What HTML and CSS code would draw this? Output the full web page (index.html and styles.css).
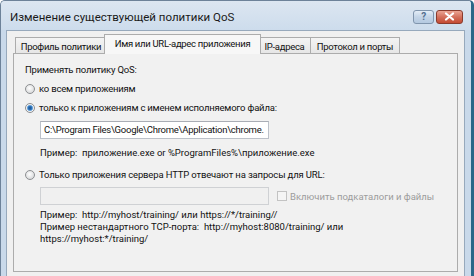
FILE: index.html
```html
<!DOCTYPE html>
<html lang="ru">
<head>
  <meta charset="UTF-8">
  <title>Изменение существующей политики QoS</title>
  <link rel="stylesheet" href="styles.css">
</head>
<body>
  <div class="window">
    <div class="titlebar">
      <span class="title">Изменение существующей политики QoS</span>
      <div class="caption-buttons">
        <span class="cap-btn help">?</span>
        <span class="cap-btn close">
          <svg width="11" height="9" viewBox="0 0 11 9"><path d="M2 1.5 L9 7.5 M9 1.5 L2 7.5" stroke="#fff" stroke-width="2.2" stroke-linecap="round"/></svg>
        </span>
      </div>
    </div>
    <div class="client">
      <div class="tabs">
        <div class="tab tab-profile">Профиль политики</div>
        <div class="tab tab-app active">Имя или URL-адрес приложения</div>
        <div class="tab tab-ip">IP-адреса</div>
        <div class="tab tab-proto">Протокол и порты</div>
      </div>
      <div class="panel">
        <div class="row">Применять политику QoS:</div>
        <div class="row option"><span class="radio"></span>ко всем приложениям</div>
        <div class="row option"><span class="radio checked"></span>только к приложениям с именем исполняемого файла:</div>
        <div class="indent">
          <div class="textbox">C:\Program Files\Google\Chrome\Application\chrome.</div>
          <div class="hint">Пример:&nbsp; приложение.exe or %ProgramFiles%\приложение.exe</div>
        </div>
        <div class="row option http"><span class="radio"></span>Только приложения сервера HTTP отвечают на запросы для URL:</div>
        <div class="indent">
          <div class="url-row">
            <div class="textbox disabled"></div>
            <div class="check disabled"><span class="checkbox"></span>Включить подкаталоги и файлы</div>
          </div>
          <div class="examples">
            Пример:&nbsp; http://myhost/training/ или https://*/training//<br>
            Пример нестандартного TCP-порта:&nbsp; http://myhost:8080/training/ или<br>
            https://myhost:*/training/
          </div>
        </div>
      </div>
    </div>
  </div>
</body>
</html>
```

FILE: styles.css
```css
body {
  margin: 0;
  background: #ffffff;
  font-family: Roboto, "Noto Sans", sans-serif;
  font-size: 9.5px;
  letter-spacing: -0.25px;
  color: #111;
}
.window {
  width: 474px;
  height: 276px;
  box-sizing: border-box;
  display: flex;
  flex-direction: column;
  background: #c9d9ea;
  border: 1px solid #6d8299;
  border-bottom: none;
  border-right: 3px solid #2c6888;
  border-radius: 5px 5px 0 0;
  overflow: hidden;
}
.titlebar {
  height: 29px;
  display: flex;
  align-items: center;
  justify-content: space-between;
  padding: 2px 0 0 9px;
  box-sizing: border-box;
  background: linear-gradient(#dce6f1, #cddcec);
}
.title {
  font-size: 11.5px;
  letter-spacing: 0;
  color: #1a1a1a;
}
.caption-buttons {
  display: flex;
  gap: 2px;
  margin-right: 8px;
}
.cap-btn {
  height: 14px;
  box-sizing: border-box;
  border-radius: 3px;
  display: flex;
  align-items: center;
  justify-content: center;
}
.help {
  width: 21px;
  border: 1px solid #8095ad;
  background: linear-gradient(#e4edf7, #c3d4e7 50%, #b4c9e0);
  color: #536f90;
  font-size: 10px;
  font-weight: bold;
}
.close {
  width: 27px;
  border: 1px solid #8a3b2d;
  background: linear-gradient(#eba493, #d4705c 50%, #c44a33);
}
.client {
  flex: 1;
  display: flex;
  flex-direction: column;
  margin: 0 6px 0 5px;
  padding: 3px 6px 4px 6px;
  background: #f0f0f0;
  border: 1px solid #97a9bc;
  border-bottom: none;
}
.tabs {
  display: flex;
  align-items: flex-end;
  height: 19px;
  padding-left: 2px;
}
.tab {
  height: 16px;
  box-sizing: border-box;
  border: 1px solid #acacac;
  border-bottom: none;
  background: linear-gradient(#f4f4f4, #e6e6e6);
  display: flex;
  align-items: center;
  justify-content: center;
  margin-left: -1px;
  white-space: nowrap;
  padding-top: 1px;
  letter-spacing: -0.3px;
}
.tab-profile { width: 92px; margin-left: 0; }
.tab-ip { width: 53px; }
.tab-proto { width: 90px; }
.tab.active {
  height: 20px;
  margin: 0 -2px -1px -3px;
  width: 157px;
  background: #f7f7f7;
  position: relative;
  z-index: 1;
  padding: 0 0 2px 0;
}
.panel {
  flex: 1;
  border: 1px solid #acacac;
  background: #f1f1f1;
  padding: 6px 11px 0 11px;
}
.row {
  height: 19px;
  display: flex;
  align-items: center;
  letter-spacing: -0.2px;
}
.radio {
  width: 10px;
  height: 10px;
  box-sizing: border-box;
  border-radius: 50%;
  border: 1px solid #8d8f92;
  background: radial-gradient(circle at 45% 40%, #ffffff, #d9dadb 75%);
  margin-right: 4px;
  flex: none;
}
.radio.checked {
  background: radial-gradient(circle, #1d4f8a 0, #2f78c0 2px, #9cc4ea 3px, #f4f4f4 3.5px, #e2e2e2 5px);
}
.indent {
  margin-left: 15px;
}
.textbox {
  width: 229px;
  height: 18px;
  box-sizing: border-box;
  margin-top: 4px;
  padding: 0 3px;
  border: 1px solid #bcc1c9;
  border-top-color: #a9adb5;
  background: #fff;
  line-height: 16px;
  white-space: nowrap;
  overflow: hidden;
}
.textbox.disabled {
  margin-top: 0;
  background: #f0f0f0;
  border-color: #cfd1d4;
}
.hint {
  margin-top: 8px;
  line-height: 12px;
  letter-spacing: 0;
}
.http {
  margin-top: 6px;
  letter-spacing: -0.15px;
}
.url-row {
  margin-top: 3px;
  display: flex;
  align-items: center;
  gap: 8px;
}
.check {
  display: flex;
  align-items: center;
  letter-spacing: 0;
}
.check.disabled {
  color: #9c9c9c;
}
.checkbox {
  width: 10px;
  height: 10px;
  box-sizing: border-box;
  border: 1px solid #c3c3c3;
  background: #f5f5f5;
  margin-right: 3px;
}
.examples {
  margin-top: 4px;
  line-height: 12px;
  letter-spacing: 0;
}
```
